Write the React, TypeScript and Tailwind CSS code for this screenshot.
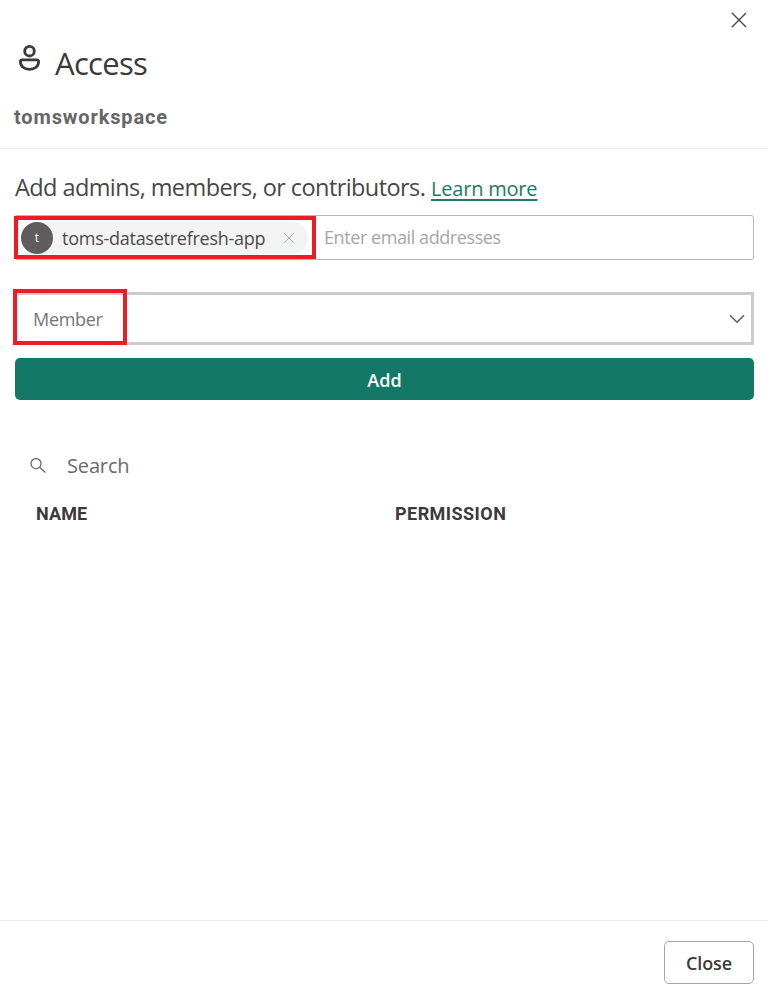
function PersonIcon() {
  return (
    <svg className="mt-[15px] ml-1 h-7 w-6" viewBox="0 0 24 28" fill="none" stroke="#3b3a39" strokeWidth="2.8">
      <circle cx="11.5" cy="6.2" r="4.8" />
      <path d="M4.2 14.8h14.6a1.8 1.8 0 0 1 1.8 1.8c0 4.8-3.8 7.8-9.1 7.8s-9.1-3-9.1-7.8a1.8 1.8 0 0 1 1.8-1.8Z" />
    </svg>
  );
}

function CrossIcon({ className }: { className: string }) {
  return (
    <svg className={className} viewBox="0 0 16 16" fill="none" stroke="currentColor">
      <path d="M1 1l14 14M15 1L1 15" vectorEffect="non-scaling-stroke" />
    </svg>
  );
}

function Header() {
  return (
    <header className="h-[149px] border-b border-[#eaeaea]">
      <div className="flex h-[30px] justify-end">
        <button aria-label="Close panel" className="mt-3 mr-[21px] h-4 w-4 text-[#484644]">
          <CrossIcon className="h-4 w-4 stroke-[1.4]" />
        </button>
      </div>
      <div className="flex h-[68px] pl-[14px]">
        <PersonIcon />
        <h1 className="mt-[13px] ml-[13px] text-[31px] leading-10 tracking-[-0.7px] text-[#3b3a39]">Access</h1>
      </div>
      <p className="pl-[14px] font-[Roboto] text-xl leading-[38px] font-bold tracking-[0.85px] text-[#666]">
        tomsworkspace
      </p>
    </header>
  );
}

function EmailField() {
  return (
    <div className="mt-[7px] flex h-[45px] items-center rounded-[3px] border border-[#b8b8b8]">
      <div className="-ml-px flex h-[43px] w-[302px] shrink-0 items-center border-4 border-[#ed1c24] pl-[3px]">
        <div className="flex h-8 w-[287px] items-center rounded-full bg-[#f3f3f3]">
          <span className="flex h-8 w-8 items-center justify-center rounded-full bg-[#5f5d5b] pt-px text-xs text-white">
            t
          </span>
          <span className="ml-[9px] w-[212px] text-lg tracking-[-0.26px] whitespace-nowrap text-[#4b4a49]">
            toms-datasetrefresh-app
          </span>
          <CrossIcon className="ml-[9px] h-3 w-3 text-[#b0b0b0]" />
        </div>
      </div>
      <input
        className="mb-px ml-2 min-w-0 flex-1 text-lg tracking-[-0.42px] outline-none placeholder:text-[#a6a6a6]"
        placeholder="Enter email addresses"
      />
    </div>
  );
}

function RoleSelect() {
  return (
    <div className="mt-8 flex h-[53px] items-center justify-between border-[3px] border-[#cbcbcb]">
      <div className="-mt-[3px] -ml-1 flex h-[56px] w-[114px] shrink-0 items-center border-4 border-[#ed1c24] pt-[3px] pl-4 text-lg tracking-[-0.3px] text-[#757575]">
        Member
      </div>
      <svg className="mr-[6px] h-4 w-4" viewBox="0 0 16 16" fill="none" stroke="#605e5c" strokeWidth="1.6">
        <path d="M1 4.2l7 7 7-7" />
      </svg>
    </div>
  );
}

export default function App() {
  return (
    <div className="flex h-[1000px] w-[768px] flex-col bg-white font-['Open_Sans',sans-serif]">
      <Header />
      <main className="flex-1 pr-[14px] pl-[14px]">
        <p className="mt-[22px] flex h-[37px] items-baseline pl-px text-[23.5px] leading-8 whitespace-nowrap text-[#484746]">
          <span className="w-[416px] tracking-[-0.58px]">Add admins, members, or contributors.</span>
          <a className="text-xl tracking-[-0.2px] text-[#217a67] underline underline-offset-[3px]">Learn more</a>
        </p>
        <EmailField />
        <RoleSelect />
        <button className="mt-[13px] ml-px flex h-[42px] w-[739px] items-center justify-center rounded-[5px] bg-[#147866] pt-[2px] text-lg font-semibold text-white">
          Add
        </button>
        <div className="mt-[50px] ml-4 flex h-8 items-center text-xl tracking-[-0.15px] text-[#6b6a69]">
          <svg className="mr-[21px] h-4 w-4" viewBox="0 0 16 16" fill="none" stroke="currentColor" strokeWidth="1.3">
            <circle cx="6" cy="5.6" r="5" />
            <path d="M9.6 9.2l5.8 5.4" />
          </svg>
          Search
        </div>
        <div className="mt-[18px] ml-[22px] flex font-[Roboto] text-lg font-bold text-[#3b3a39]">
          <span className="w-[359px] tracking-[0.1px]">NAME</span>
          <span className="tracking-[0.45px]">PERMISSION</span>
        </div>
      </main>
      <footer className="flex h-20 justify-end border-t border-[#eaeaea] pt-5 pr-[14px]">
        <button className="h-[43px] w-[90px] rounded-[5px] border border-[#a6a6a6] pt-px text-lg font-semibold tracking-[-0.1px] text-[#3b3a39]">
          Close
        </button>
      </footer>
    </div>
  );
}
